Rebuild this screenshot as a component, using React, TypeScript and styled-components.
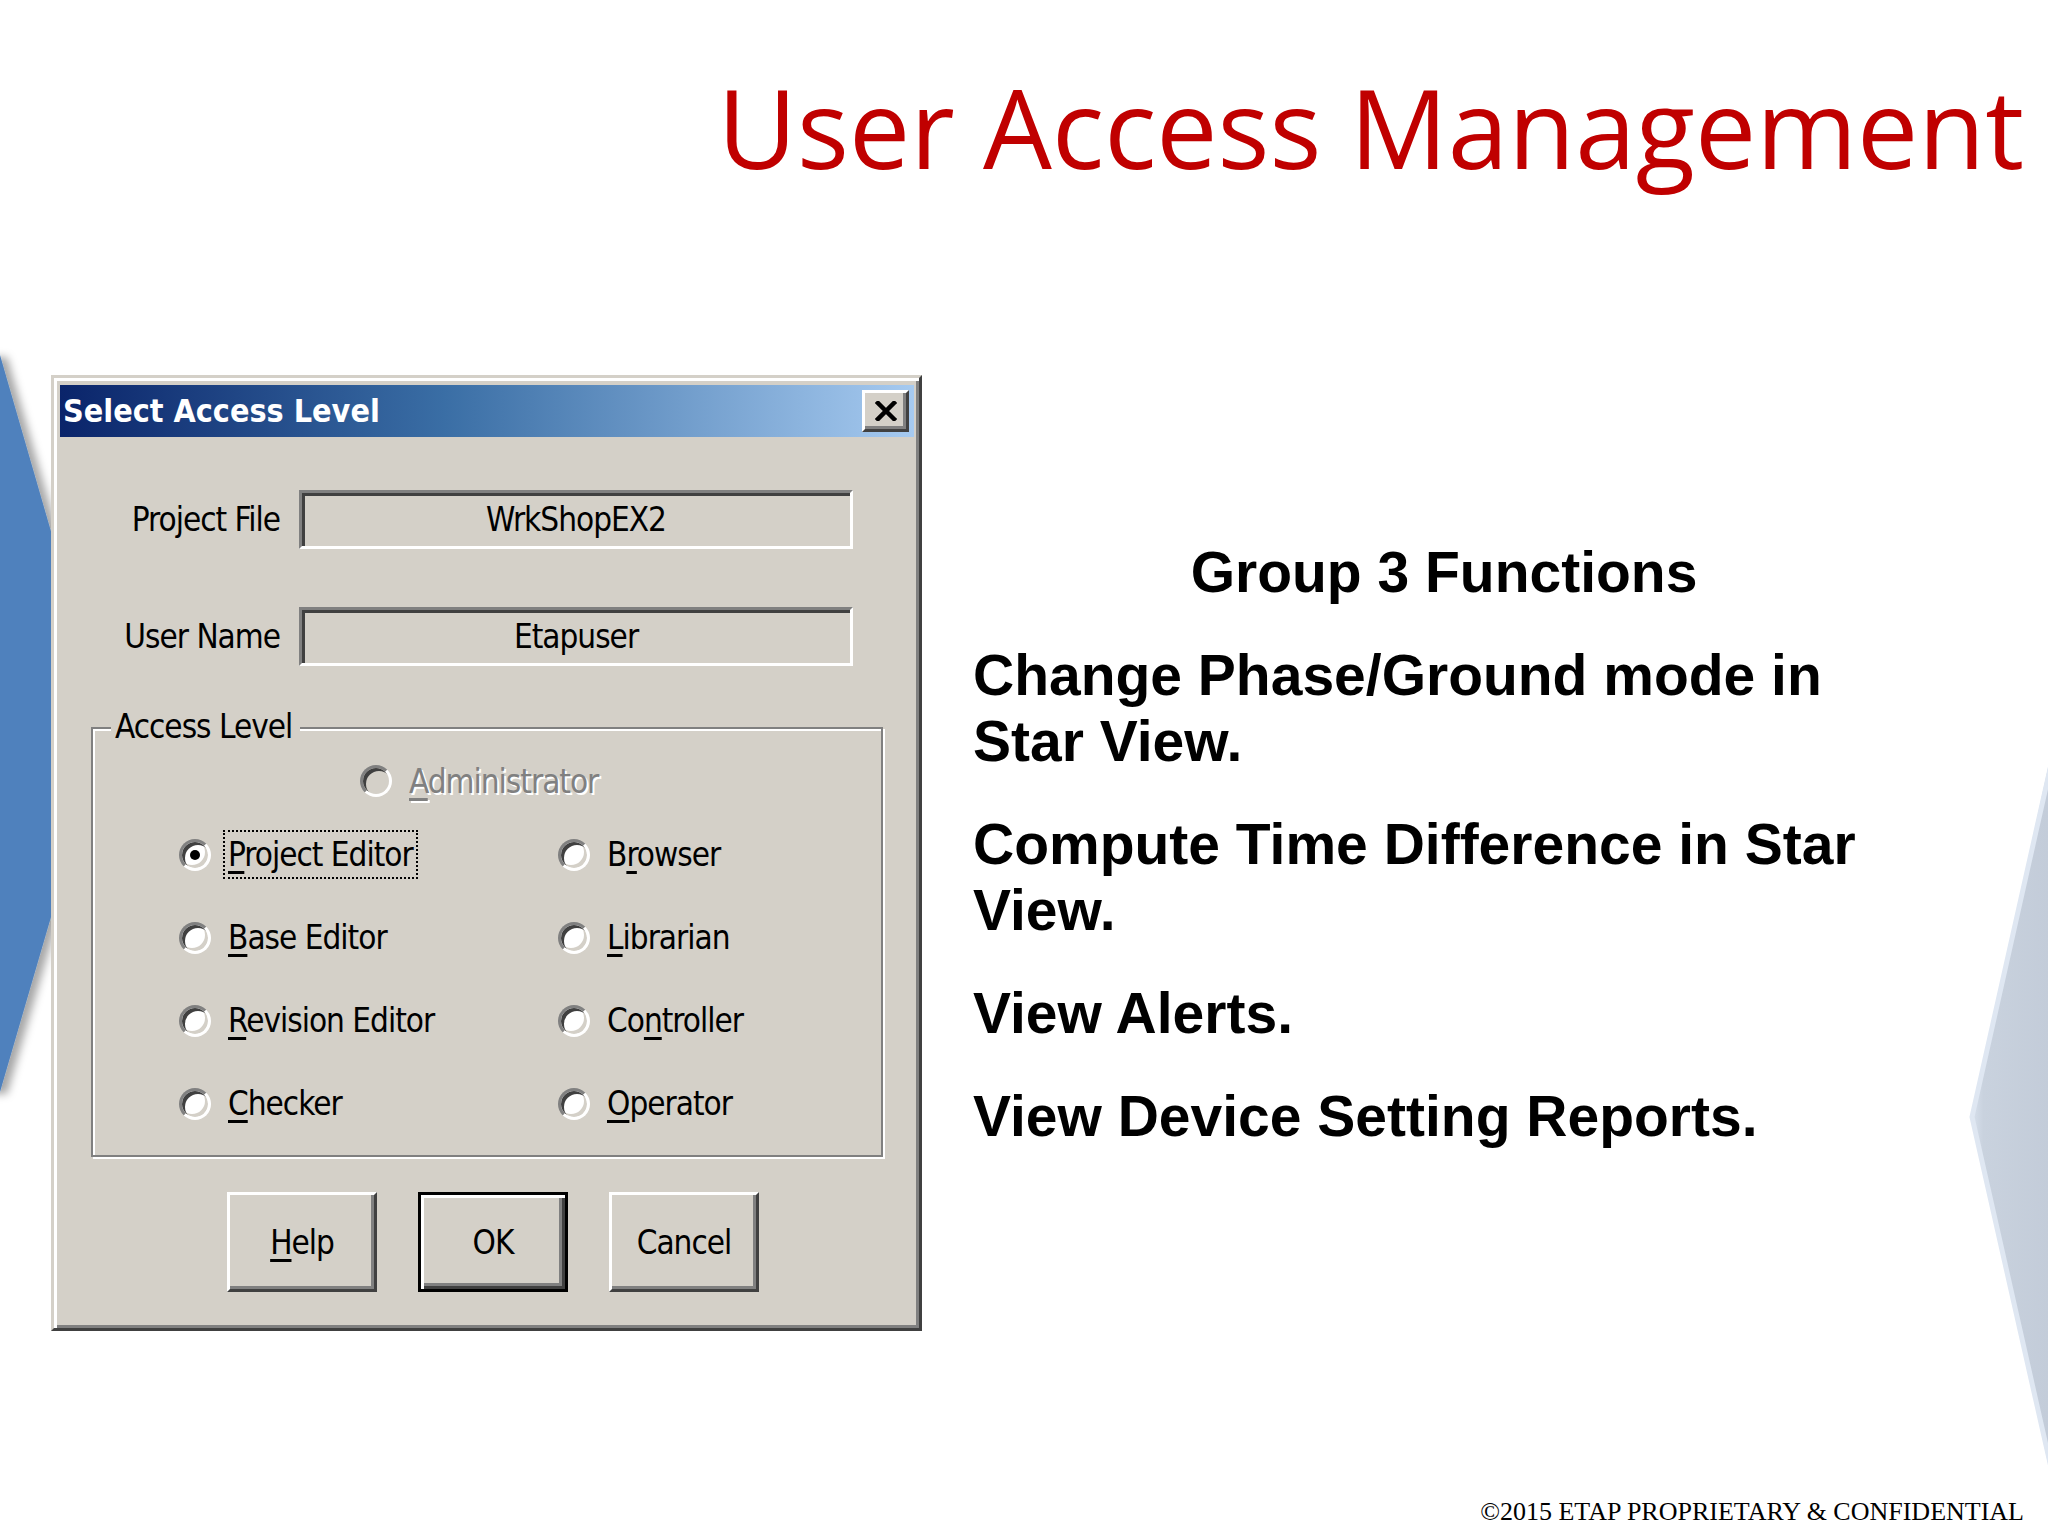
import styled, { createGlobalStyle } from "styled-components";

const GlobalStyle = createGlobalStyle`
  html, body {
    margin: 0;
    padding: 0;
    background: #fff;
  }
`;

const winFont = `"Liberation Sans Narrow", "DejaVu Sans Condensed", "Liberation Sans", Arial, sans-serif`;

const Slide = styled.div`
  position: relative;
  width: 2048px;
  height: 1536px;
  background: #fff;
  overflow: hidden;
  display: flex;
  flex-direction: column;
`;

const Backdrop = styled.svg`
  position: absolute;
  left: 0;
  top: 0;
  width: 2048px;
  height: 1536px;
  z-index: 0;
`;

const Header = styled.header`
  position: relative;
  z-index: 1;
  height: 375px;
  display: flex;
  justify-content: flex-end;
  align-items: flex-start;
  padding-right: 24px;
  box-sizing: border-box;
`;

const Title = styled.h1`
  margin: 0;
  padding-top: 72px;
  font-family: "Open Sans", "Noto Sans", sans-serif;
  font-weight: 400;
  font-size: 109px;
  line-height: 1;
  color: #c00000;
`;

const Main = styled.main`
  position: relative;
  z-index: 1;
  display: flex;
  align-items: flex-start;
  padding-left: 51px;
  gap: 51px;
`;

/* ---- dialog ---- */

const Dialog = styled.div`
  width: 871px;
  height: 956px;
  box-sizing: border-box;
  background: #d4d0c8;
  border: 3px solid;
  border-color: #d4d0c8 #404040 #404040 #d4d0c8;
  box-shadow: inset 3px 3px 0 #fff, inset -3px -3px 0 #808080;
  padding: 7px 5px 6px 6px;
  display: flex;
  flex-direction: column;
  font-family: ${winFont};
  font-size: 33px;
  letter-spacing: -1px;
  color: #000;
`;

const TitleBar = styled.div`
  height: 52px;
  display: flex;
  align-items: center;
  justify-content: space-between;
  padding: 0 5px 0 3px;
  background: linear-gradient(to right, #0a246a 0%, #3a6ea5 45%, #a6caf0 100%);
`;

const TitleText = styled.span`
  color: #fff;
  font-weight: bold;
  font-size: 32px;
  letter-spacing: 0;
`;

const CloseButton = styled.button`
  width: 47px;
  height: 42px;
  padding: 0;
  display: flex;
  align-items: center;
  justify-content: center;
  background: #d4d0c8;
  border: 3px solid;
  border-color: #fff #404040 #404040 #fff;
  box-shadow: inset -3px -3px 0 #808080;
`;

const Body = styled.div`
  display: flex;
  flex-direction: column;
`;

const FieldRow = styled.div<{ $top: number }>`
  display: grid;
  grid-template-columns: 220px 554px;
  column-gap: 19px;
  align-items: center;
  margin-top: ${(p) => p.$top}px;
`;

const FieldLabel = styled.span`
  text-align: right;
`;

const Field = styled.div`
  height: 59px;
  box-sizing: border-box;
  display: flex;
  align-items: center;
  justify-content: center;
  background: #d4d0c8;
  border: 3px solid;
  border-color: #808080 #fff #fff #808080;
  box-shadow: inset 3px 3px 0 #404040, inset -3px -3px 0 #d4d0c8;
`;

const GroupBox = styled.div`
  position: relative;
  margin: 61px 0 0 31px;
  width: 792px;
  height: 430px;
  box-sizing: border-box;
  border: 2px solid #808080;
  box-shadow: inset 2px 2px 0 #fff, 2px 2px 0 #fff;
  padding: 32px 0 0 86px;
`;

const Legend = styled.span`
  position: absolute;
  left: 18px;
  top: -24px;
  padding: 0 8px 0 4px;
  background: #d4d0c8;
  line-height: 44px;
`;

const AdminRow = styled.div`
  height: 40px;
  display: flex;
  align-items: center;
  padding-left: 181px;
`;

const RadioGrid = styled.div`
  margin-top: 12px;
  display: grid;
  grid-template-columns: 379px 1fr;
  grid-auto-rows: 83px;
`;

const RadioItem = styled.label`
  display: flex;
  align-items: center;
  gap: 17px;
`;

const RadioCircle = styled.span<{ $checked?: boolean; $disabled?: boolean }>`
  position: relative;
  flex: none;
  width: 32px;
  height: 32px;
  box-sizing: border-box;
  border-radius: 50%;
  border: 3px solid;
  border-color: #808080 #fff #fff #808080;
  background: ${(p) => (p.$disabled ? "#d4d0c8" : "#fff")};
  box-shadow: inset 3px 3px 0 #404040, inset -3px -3px 0 #d4d0c8;

  &::after {
    content: "";
    display: ${(p) => (p.$checked ? "block" : "none")};
    position: absolute;
    left: 50%;
    top: 50%;
    width: 10px;
    height: 10px;
    margin: -5px 0 0 -5px;
    border-radius: 50%;
    background: #000;
  }
`;

const RadioText = styled.span<{ $disabled?: boolean; $focused?: boolean }>`
  color: ${(p) => (p.$disabled ? "#808080" : "#000")};
  text-shadow: ${(p) => (p.$disabled ? "2px 2px 0 #fff" : "none")};
  outline: ${(p) => (p.$focused ? "2px dotted #000" : "none")};
  outline-offset: 3px;
`;

const Key = styled.span`
  text-decoration: underline;
  text-decoration-thickness: 3px;
  text-underline-offset: 5px;
`;

const ButtonRow = styled.div`
  display: flex;
  gap: 41px;
  margin-top: 35px;
  padding-left: 167px;
`;

const DlgButton = styled.button<{ $default?: boolean }>`
  width: 150px;
  height: 100px;
  box-sizing: border-box;
  padding: 0;
  font-family: ${winFont};
  font-size: 33px;
  letter-spacing: -1px;
  color: #000;
  background: #d4d0c8;
  border: 3px solid;
  border-color: ${(p) => (p.$default ? "#000" : "#fff #404040 #404040 #fff")};
  box-shadow: ${(p) =>
    p.$default
      ? "inset 3px 3px 0 #fff, inset -3px -3px 0 #404040, inset -6px -6px 0 #808080"
      : "inset -3px -3px 0 #808080"};
`;

/* ---- right text ---- */

const Notes = styled.section`
  width: 942px;
  margin-top: 164px;
  font-family: "Liberation Sans", Arial, sans-serif;
  font-weight: bold;
  font-size: 57px;
  line-height: 66px;
  color: #000;
`;

const NotesHeading = styled.h2`
  margin: 0;
  font: inherit;
  text-align: center;
`;

const Note = styled.p`
  margin: 37px 0 0;
`;

const Footer = styled.footer`
  position: relative;
  z-index: 1;
  margin-top: auto;
  padding: 0 24px 12px 0;
  text-align: right;
  font-family: "Liberation Serif", "Times New Roman", serif;
  font-size: 26px;
  line-height: 25px;
  color: #000;
`;

const radios = [
  { left: <><Key>P</Key>roject Editor</>, right: <>B<Key>r</Key>owser</>, checked: true },
  { left: <><Key>B</Key>ase Editor</>, right: <><Key>L</Key>ibrarian</> },
  { left: <><Key>R</Key>evision Editor</>, right: <>Co<Key>n</Key>troller</> },
  { left: <><Key>C</Key>hecker</>, right: <><Key>O</Key>perator</> },
];

const App = () => {
  return (
    <Slide>
      <GlobalStyle />
      <Backdrop viewBox="0 0 2048 1536">
        <defs>
          <filter id="shade" x="-20%" y="-10%" width="160%" height="120%">
            <feDropShadow dx="7" dy="2" stdDeviation="4" floodColor="#000" floodOpacity="0.35" />
          </filter>
          <linearGradient id="pale" x1="0" y1="0" x2="1" y2="0">
            <stop offset="0" stopColor="#d7e0ec" />
            <stop offset="0.15" stopColor="#c9d2de" />
            <stop offset="1" stopColor="#c3ccd9" />
          </linearGradient>
        </defs>
        <polygon points="-20,355 0,355 107,725 0,1092 -20,1092" fill="#4f81bd" filter="url(#shade)" />
        <polygon points="2048,768 1972,1117 2048,1463" fill="url(#pale)" />
        <polyline points="2052,760 1972,1117 2052,1472" fill="none" stroke="#dfe7f2" strokeWidth="5" />
      </Backdrop>

      <Header>
        <Title>User Access Management</Title>
      </Header>

      <Main>
        <Dialog>
          <TitleBar>
            <TitleText>Select Access Level</TitleText>
            <CloseButton aria-label="Close">
              <svg width="22" height="20" viewBox="0 0 22 20">
                <path d="M3 2 L19 18 M19 2 L3 18" stroke="#000" strokeWidth="4.5" strokeLinecap="square" />
              </svg>
            </CloseButton>
          </TitleBar>

          <Body>
            <FieldRow $top={53}>
              <FieldLabel>Project File</FieldLabel>
              <Field>WrkShopEX2</Field>
            </FieldRow>
            <FieldRow $top={58}>
              <FieldLabel>User Name</FieldLabel>
              <Field>Etapuser</Field>
            </FieldRow>

            <GroupBox>
              <Legend>Access Level</Legend>
              <AdminRow>
                <RadioItem>
                  <RadioCircle $disabled />
                  <RadioText $disabled>
                    <Key>A</Key>dministrator
                  </RadioText>
                </RadioItem>
              </AdminRow>
              <RadioGrid>
                {radios.map((r, i) => (
                  <>
                    <RadioItem key={"l" + i}>
                      <RadioCircle $checked={r.checked} />
                      <RadioText $focused={r.checked}>{r.left}</RadioText>
                    </RadioItem>
                    <RadioItem key={"r" + i}>
                      <RadioCircle />
                      <RadioText>{r.right}</RadioText>
                    </RadioItem>
                  </>
                ))}
              </RadioGrid>
            </GroupBox>

            <ButtonRow>
              <DlgButton>
                <Key>H</Key>elp
              </DlgButton>
              <DlgButton $default>OK</DlgButton>
              <DlgButton>Cancel</DlgButton>
            </ButtonRow>
          </Body>
        </Dialog>

        <Notes>
          <NotesHeading>Group 3 Functions</NotesHeading>
          <Note>Change Phase/Ground mode in Star View.</Note>
          <Note>Compute Time Difference in Star View.</Note>
          <Note>View Alerts.</Note>
          <Note>View Device Setting Reports.</Note>
        </Notes>
      </Main>

      <Footer>©2015 ETAP PROPRIETARY &amp; CONFIDENTIAL</Footer>
    </Slide>
  );
};

export default App;
